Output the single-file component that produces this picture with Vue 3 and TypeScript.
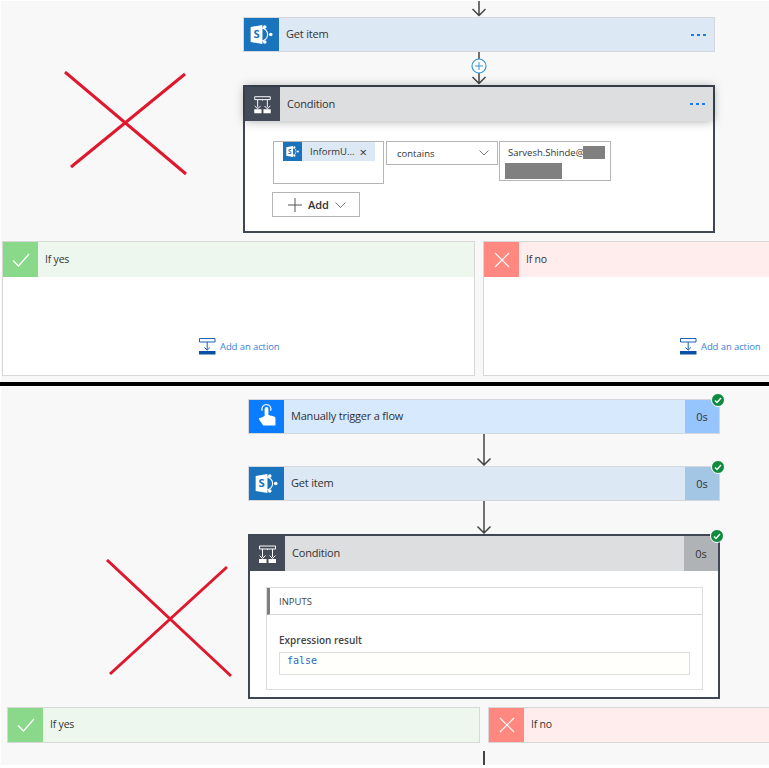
<template>
  <div class="shot">
    <svg class="sprite" width="0" height="0" aria-hidden="true">
      <defs>
        <symbol id="sp" viewBox="0 0 35 35">
          <path d="M17 10.500a7 7 0 1 1 0 14" fill="none" stroke="#fff" stroke-width="1.200" />
          <circle cx="21" cy="9.500" r="1.900" fill="#fff" />
          <circle cx="27.300" cy="17.500" r="1.900" fill="#fff" />
          <circle cx="21" cy="25.500" r="1.900" fill="#fff" />
          <path d="M6 9.500 18.500 7.500v20L6 25.500z" fill="#fff" />
          <text x="12.300" y="21.500" text-anchor="middle" class="sp-letter">S</text>
        </symbol>
        <symbol id="cond" viewBox="0 0 35 35">
          <path d="M9.500 10h16v3h-16zM12.500 13v8M22.500 13v8M17.500 13v1" fill="none" stroke="#fff" stroke-width="1" />
          <path d="M9.500 19.500l3 3 3-3M19.500 19.500l3 3 3-3" fill="none" stroke="#fff" stroke-width="1" />
          <path d="M9 23h7.500v4H9zM18.500 23H26v4h-7.500z" fill="#fff" />
        </symbol>
        <symbol id="action" viewBox="0 0 17 17">
          <path d="M.5.5h15.500v3.500H.5z" fill="#fff" stroke="#1b62b5" />
          <path d="M8.200 4v8M5.500 9.500l2.700 2.700 2.700-2.700" fill="none" stroke="#1b62b5" />
          <path d="M0 13h16.500v3.500H0z" fill="#0b4fa3" />
        </symbol>
      </defs>
    </svg>

    <section class="panel panel-top">
      <svg class="line-arrow first" width="20" height="16" viewBox="0 0 20 16">
        <path d="M10 0v14M3.500 8l6.500 6.500 6.500-6.500" />
      </svg>
      <div class="card item">
        <div class="head">
          <svg class="icon sp-bg" viewBox="0 0 35 35"><use href="#sp" /></svg>
          <span class="title">Get item</span>
          <span class="dots"><i></i><i></i><i></i></span>
        </div>
      </div>
      <div class="connector-plus">
        <svg width="20" height="33" viewBox="0 0 20 33">
          <path class="stem" d="M10 0v32M3.500 25l6.500 6.500 6.500-6.500" />
          <circle cx="10" cy="14" r="7" fill="#fff" stroke="#3a96dd" stroke-width="1.200" />
          <path d="M6 14h8M10 10v8" stroke="#3a96dd" stroke-width="1" />
        </svg>
      </div>
      <div class="card condition editing">
        <div class="head">
          <svg class="icon cond-bg" viewBox="0 0 35 35"><use href="#cond" /></svg>
          <span class="title">Condition</span>
          <span class="dots"><i></i><i></i><i></i></span>
        </div>
        <div class="cond-body">
          <div class="cond-row">
            <div class="field token-field">
              <div class="token">
                <svg class="token-icon" viewBox="0 0 35 35"><use href="#sp" /></svg>
                <span class="token-text">InformU...</span>
                <span class="token-x">×</span>
              </div>
            </div>
            <div class="field select-field">
              <span>contains</span>
              <svg width="10" height="6" viewBox="0 0 10 6"><path d="M.5.500l4.500 4.500 4.500-4.500" fill="none" stroke="#777" /></svg>
            </div>
            <div class="field value-field">
              <div class="value-line">
                <span>Sarvesh.Shinde@</span><span class="redact r1"></span>
              </div>
              <span class="redact r2"></span>
            </div>
          </div>
          <div class="add-btn">
            <svg width="14" height="14" viewBox="0 0 14 14"><path d="M7 0v14M0 7h14" stroke="#555" /></svg>
            <span>Add</span>
            <svg width="11" height="6" viewBox="0 0 11 6"><path d="M.5.500l5 5 5-5" fill="none" stroke="#777" /></svg>
          </div>
        </div>
      </div>
      <div class="branches">
        <div class="branch yes tall">
          <div class="branch-head">
            <span class="branch-icon"><svg width="18" height="14" viewBox="0 0 18 14"><path d="M1 7.500l5.500 5.500L17 1" fill="none" stroke="#fff" stroke-width="1.200" /></svg></span>
            <span class="title">If yes</span>
          </div>
          <div class="branch-body">
            <div class="add-action">
              <svg width="17" height="17" viewBox="0 0 17 17"><use href="#action" /></svg>
              <span>Add an action</span>
            </div>
          </div>
        </div>
        <div class="branch no tall">
          <div class="branch-head">
            <span class="branch-icon"><svg width="16" height="16" viewBox="0 0 16 16"><path d="M1 1l14 14M15 1L1 15" fill="none" stroke="#fff" stroke-width="1.100" /></svg></span>
            <span class="title">If no</span>
          </div>
          <div class="branch-body">
            <div class="add-action">
              <svg width="17" height="17" viewBox="0 0 17 17"><use href="#action" /></svg>
              <span>Add an action</span>
            </div>
          </div>
        </div>
      </div>
      <svg class="cross cross-top" width="130" height="110" viewBox="0 0 130 110">
        <path d="M3 1l121 102M123 3L9 96" />
      </svg>
    </section>

    <div class="divider"></div>

    <section class="panel panel-bottom">
      <div class="card item manual">
        <div class="head">
          <svg class="icon manual-bg" viewBox="0 0 35 35">
            <path d="M15.500 17V9.500a2 2 0 0 1 4 0V16l6 1.500c1 .3 1.500 1 1.500 2V27H14l-4.500-6.500c-.6-1 .8-2.300 1.800-1.500z" fill="#fff" />
            <path d="M13 11.500a4.800 4.800 0 1 1 8.800 0" fill="none" stroke="#fff" stroke-width="1.200" />
          </svg>
          <span class="title">Manually trigger a flow</span>
          <span class="time">0s</span>
        </div>
        <span class="badge"><svg width="8" height="7" viewBox="0 0 8 7"><path d="M1 3.500l2 2L7 1" fill="none" stroke="#fff" stroke-width="1.400" /></svg></span>
      </div>
      <svg class="line-arrow" width="20" height="32" viewBox="0 0 20 32">
        <path d="M10 0v31M3.500 24.500l6.500 6.500 6.500-6.500" />
      </svg>
      <div class="card item">
        <div class="head">
          <svg class="icon sp-bg" viewBox="0 0 35 35"><use href="#sp" /></svg>
          <span class="title">Get item</span>
          <span class="time">0s</span>
        </div>
        <span class="badge"><svg width="8" height="7" viewBox="0 0 8 7"><path d="M1 3.500l2 2L7 1" fill="none" stroke="#fff" stroke-width="1.400" /></svg></span>
      </div>
      <svg class="line-arrow" width="20" height="33" viewBox="0 0 20 33">
        <path d="M10 0v32M3.500 25.500l6.500 6.500 6.500-6.500" />
      </svg>
      <div class="card condition result">
        <div class="head">
          <svg class="icon cond-bg" viewBox="0 0 35 35"><use href="#cond" /></svg>
          <span class="title">Condition</span>
          <span class="time">0s</span>
        </div>
        <span class="badge"><svg width="8" height="7" viewBox="0 0 8 7"><path d="M1 3.500l2 2L7 1" fill="none" stroke="#fff" stroke-width="1.400" /></svg></span>
        <div class="inputs-wrap">
          <div class="inputs">
            <div class="inputs-head">INPUTS</div>
            <div class="inputs-body">
              <div class="expr-label">Expression result</div>
              <div class="expr-value">false</div>
            </div>
          </div>
        </div>
      </div>
      <div class="branches">
        <div class="branch yes">
          <div class="branch-head">
            <span class="branch-icon"><svg width="18" height="14" viewBox="0 0 18 14"><path d="M1 7.500l5.500 5.500L17 1" fill="none" stroke="#fff" stroke-width="1.200" /></svg></span>
            <span class="title">If yes</span>
          </div>
        </div>
        <div class="branch no">
          <div class="branch-head">
            <span class="branch-icon"><svg width="16" height="16" viewBox="0 0 16 16"><path d="M1 1l14 14M15 1L1 15" fill="none" stroke="#fff" stroke-width="1.100" /></svg></span>
            <span class="title">If no</span>
          </div>
        </div>
      </div>
      <div class="tail"></div>
      <svg class="cross cross-bottom" width="130" height="122" viewBox="0 0 130 122">
        <path d="M2 1l124 116M122 8L5 115" />
      </svg>
    </section>
  </div>
</template>

<script setup lang="ts">
// static screenshot, nothing to compute
</script>

<style>
html,
body {
  margin: 0;
  background: #fff;
}
</style>

<style scoped>
.shot {
  width: 769px;
  height: 768px;
  overflow: hidden;
  font-family: "Open Sans", "Noto Sans", sans-serif;
  color: #333;
  background: #fff;
}

.sprite {
  position: absolute;
}

.sp-letter {
  font-family: "Open Sans", sans-serif;
  font-size: 12px;
  font-weight: 700;
  fill: #1a73bd;
}

.panel {
  position: relative;
  background: #f8f8f8;
  display: flex;
  flex-direction: column;
  overflow: hidden;
  box-shadow: inset 1px 1px 0 #fff;
}

.panel-top {
  height: 382px;
  padding: 1px 0 0 243px;
  box-sizing: border-box;
}

.panel-bottom {
  height: 379px;
  padding: 13px 0 0 248px;
  box-sizing: border-box;
}

.divider {
  height: 4px;
  background: #000;
}

.line-arrow {
  display: block;
  margin-left: 226px;
  fill: none;
  flex: none;
}

.line-arrow path,
.stem {
  fill: none;
  stroke: #444;
  stroke-width: 1.500px;
}

.connector-plus {
  height: 33px;
  margin-left: 226px;
  flex: none;
}

.connector-plus svg {
  display: block;
}

.card {
  position: relative;
  width: 472px;
  box-sizing: border-box;
  flex: none;
}

.item {
  height: 35px;
  background: #dce8f4;
  border: 1px solid #d4d8dc;
}

.item .head {
  height: 33px;
}

.manual {
  background: #d7e9fd;
}

.head {
  display: flex;
  align-items: center;
  height: 34px;
}

.icon {
  width: 35px;
  height: 34px;
  flex: none;
  display: block;
}

.item .icon {
  height: 33px;
}

.sp-bg {
  background: #1a73bd;
}

.cond-bg {
  background: #444b58;
}

.manual-bg {
  background: #0a7cff;
}

.title {
  font-size: 11px;
  letter-spacing: -0.2px;
  margin-left: 7px;
  padding-bottom: 2px;
  color: #333;
  white-space: nowrap;
}

.dots {
  margin-left: auto;
  margin-right: 8px;
  display: flex;
  gap: 3px;
}

.dots i {
  width: 3px;
  height: 2px;
  background: #1b7dd8;
}

.time {
  margin-left: auto;
  width: 34px;
  align-self: stretch;
  display: flex;
  align-items: center;
  justify-content: center;
  font-size: 11px;
  background: #a4c6e5;
}

.manual .time {
  background: #96c5fd;
}

.result .time {
  background: #afb3b6;
}

.badge {
  position: absolute;
  top: -7px;
  right: -6px;
  width: 14px;
  height: 14px;
  border-radius: 50%;
  background: #0f8a3e;
  border: 1px solid #fff;
  box-sizing: border-box;
  display: flex;
  align-items: center;
  justify-content: center;
}

.condition {
  background: #fff;
  border: 2px solid #3f4753;
}

.condition .head {
  background: #dcdee0;
}

.editing {
  height: 148px;
}

.editing .head {
  box-shadow: 0 0 10px rgba(0, 0, 0, 0.35);
  position: relative;
}

.result {
  height: 165px;
}

.result .head {
  height: 35px;
}

.result .icon {
  height: 35px;
}

.cond-body {
  padding: 20px 0 0 28px;
}

.cond-row {
  display: flex;
  align-items: flex-start;
  gap: 2px;
}

.field {
  box-sizing: border-box;
  background: #fff;
  border: 1px solid #b5b5b5;
  font-size: 9.500px;
  flex: none;
}

.token-field {
  width: 111px;
  height: 43px;
  padding: 0 9px;
}

.token {
  display: flex;
  align-items: center;
  height: 19px;
  width: 92px;
  background: #dce8f4;
}

.token-icon {
  width: 19px;
  height: 19px;
  background: #1a73bd;
  flex: none;
}

.token-text {
  margin-left: 8px;
  white-space: nowrap;
}

.token-x {
  margin-left: 5px;
  font-size: 13px;
}

.select-field {
  width: 112px;
  height: 24px;
  display: flex;
  align-items: center;
  justify-content: space-between;
  padding: 0 8px 0 10px;
}

.value-field {
  width: 112px;
  height: 40px;
  margin-left: -1px;
  padding: 4px 5px;
  position: relative;
}

.value-line {
  display: flex;
  align-items: center;
  white-space: nowrap;
  height: 13px;
  padding-left: 3px;
}

.redact {
  display: block;
  background: #808080;
}

.r1 {
  width: 30px;
  height: 13px;
  margin-left: -1px;
}

.r2 {
  width: 57px;
  height: 16px;
  margin-top: 4px;
}

.add-btn {
  margin: 8px 0 0 -1px;
  width: 88px;
  height: 25px;
  box-sizing: border-box;
  border: 1px solid #b5b5b5;
  background: #fff;
  display: flex;
  align-items: center;
  padding-left: 15px;
  gap: 6px;
  font-size: 11px;
  font-weight: 600;
}

.branches {
  display: flex;
  gap: 8px;
  margin-top: 8px;
  flex: none;
  width: 800px;
}

.panel-top .branches {
  margin-left: -241px;
}

.panel-bottom .branches {
  margin-left: -241px;
}

.branch {
  width: 473px;
  height: 36px;
  flex: none;
  box-sizing: border-box;
  border: 1px solid #d8d8d8;
  background: #fff;
}

.branch.tall {
  height: 135px;
  display: flex;
  flex-direction: column;
}

.branch-head {
  height: 34px;
  display: flex;
  align-items: center;
}

.tall .branch-head {
  height: 35px;
  flex: none;
}

.yes .branch-head {
  background: #edf7ee;
}

.no .branch-head {
  background: #ffeded;
}

.branch-icon {
  width: 35px;
  align-self: stretch;
  flex: none;
  display: flex;
  align-items: center;
  justify-content: center;
}

.yes .branch-icon {
  background: #8ad98a;
}

.no .branch-icon {
  background: #ff8880;
}

.branch .title {
  margin-left: 7px;
  font-size: 10.500px;
}

.branch-body {
  flex: 1;
  position: relative;
}

.add-action {
  position: absolute;
  top: 61px;
  left: 196px;
  display: flex;
  align-items: center;
  gap: 4px;
  font-size: 9.500px;
  letter-spacing: -0.1px;
  color: #3b82d8;
  white-space: nowrap;
}

.inputs-wrap {
  padding: 16px 15px 0 16px;
}

.inputs {
  border: 1px solid #dcdcdc;
  height: 103px;
  box-sizing: border-box;
}

.inputs-head {
  height: 27px;
  border-left: 3px solid #7d7f83;
  border-bottom: 1px solid #d6d6d6;
  box-sizing: border-box;
  font-size: 9.500px;
  line-height: 27px;
  padding-left: 9px;
  color: #444;
}

.inputs-body {
  padding: 18px 12px 0 12px;
}

.expr-label {
  font-size: 10px;
  font-weight: 600;
  color: #444;
  line-height: 14px;
}

.expr-value {
  margin-top: 5px;
  height: 23px;
  box-sizing: border-box;
  border: 1px solid #ddd;
  background: #fffffc;
  font-family: "DejaVu Sans Mono", monospace;
  font-size: 10px;
  color: #2b6cb8;
  padding-left: 7px;
  line-height: 16px;
}

.tail {
  width: 1.500px;
  height: 14px;
  margin: 8px 0 0 235px;
  background: #444;
  flex: none;
}

.cross {
  position: absolute;
  fill: none;
}

.cross path {
  fill: none;
  stroke: #e0182d;
  stroke-width: 3px;
}

.cross-top {
  left: 62px;
  top: 71px;
}

.cross-bottom {
  left: 105px;
  top: 173px;
}
</style>
